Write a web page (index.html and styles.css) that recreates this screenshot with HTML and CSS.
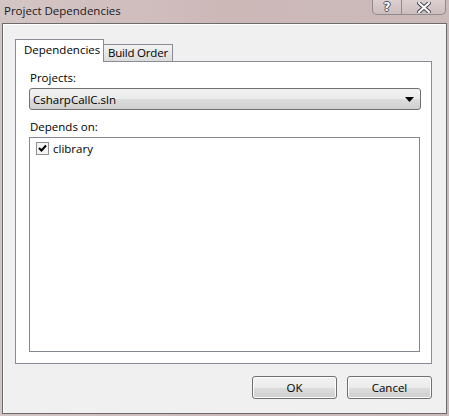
FILE: index.html
```html
<!DOCTYPE html>
<html lang="en">
<head>
    <meta charset="UTF-8">
    <title>Project Dependencies</title>
    <link rel="stylesheet" href="styles.css">
</head>
<body>
    <div class="window">
        <header class="titlebar">
            <span class="title">Project Dependencies</span>
            <div class="caption-buttons">
                <span class="cap-btn help">?</span>
                <span class="cap-btn close">
                    <svg width="14" height="11" viewBox="0 0 14 11">
                        <path d="M2 1 L12 10 M12 1 L2 10" stroke="#4a4a55" stroke-width="4" stroke-linecap="square"/>
                        <path d="M2 1 L12 10 M12 1 L2 10" stroke="#fff" stroke-width="2" stroke-linecap="square"/>
                    </svg>
                </span>
            </div>
        </header>

        <div class="client">
            <div class="tabs">
                <div class="tab active">Dependencies</div>
                <div class="tab">Build Order</div>
            </div>
            <div class="tab-page">
                <label class="field-label">Projects:</label>
                <div class="combo">
                    <span>CsharpCallC.sln</span>
                    <svg width="9" height="5" viewBox="0 0 9 5"><path d="M0 0 H9 L4.5 5 Z" fill="#000"/></svg>
                </div>
                <label class="field-label">Depends on:</label>
                <div class="listbox">
                    <div class="list-item">
                        <span class="checkbox">
                            <svg width="9" height="9" viewBox="0 0 9 9"><path d="M1 4 L3.5 6.5 L8 1.5" stroke="#000" stroke-width="2" fill="none"/></svg>
                        </span>
                        <span>clibrary</span>
                    </div>
                </div>
            </div>
            <footer class="dialog-buttons">
                <button class="btn">OK</button>
                <button class="btn">Cancel</button>
            </footer>
        </div>
    </div>
</body>
</html>
```

FILE: styles.css
```css
/* Reset */
* {
  margin: 0;
  padding: 0;
  box-sizing: border-box;
}

body {
  width: 449px;
  height: 416px;
  overflow: hidden;
  font-family: "Open Sans", "Noto Sans", sans-serif;
  font-size: 11.5px;
  color: #000;
  background: #c8b5b5;
}

/* Window frame */
.window {
  display: flex;
  flex-direction: column;
  height: 416px;
  padding: 0 2px 2px 2px;
  background: linear-gradient(90deg, #d4c5c5 0%, #cdb8b8 50%, #cbbaba 100%);
}

.titlebar {
  display: flex;
  justify-content: space-between;
  align-items: flex-start;
  height: 23px;
}

.title {
  padding: 1px 0 0 2px;
  font-size: 11.5px;
  line-height: 20px;
  color: #1a1a1a;
}

.caption-buttons {
  display: flex;
  margin-right: 1px;
  border: 1px solid #8f8a8c;
  border-top: none;
  border-radius: 0 0 5px 5px;
  background: linear-gradient(#dccfcf, #cdbebe);
  height: 15px;
}

.cap-btn {
  display: flex;
  align-items: center;
  justify-content: center;
  height: 14px;
}

.help {
  width: 29px;
  border-right: 1px solid #8f8a8c;
  font-family: "DejaVu Sans", sans-serif;
  font-weight: bold;
  font-size: 12px;
  color: #fff;
  text-shadow: 1px 0 #4a4a55, -1px 0 #4a4a55, 0 1px #4a4a55, 0 -1px #4a4a55;
}

.close {
  width: 43px;
}

/* Client area */
.client {
  flex: 1;
  display: flex;
  flex-direction: column;
  padding: 14px 14px 0 12px;
  background: #f0f0f0;
  border: 1px solid #6b6b6b;
  box-shadow: inset 1px 1px 0 #fff;
}

.tabs {
  display: flex;
  align-items: flex-end;
  height: 23px;
  position: relative;
  z-index: 1;
}

.tab {
  height: 17px;
  padding: 0 4px 0 4px;
  line-height: 16px;
  border: 1px solid #898c95;
  border-bottom: none;
  background: linear-gradient(#f3f3f3, #dcdcdc);
  letter-spacing: -0.2px;
}

.tab.active {
  height: 23px;
  width: 89px;
  padding: 2px 0 0 8px;
  background: #fff;
  border-right: 1px solid #898c95;
  margin-bottom: -1px;
  letter-spacing: 0;
}

.tab.active + .tab {
  border-left: none;
}

.tab-page {
  height: 303px;
  display: flex;
  flex-direction: column;
  padding: 7px 10px 0 13px;
  background: #fff;
  border: 1px solid #898c95;
}

.field-label {
  display: block;
  height: 19px;
  line-height: 18px;
  padding-left: 1px;
}

.combo {
  display: flex;
  justify-content: space-between;
  align-items: center;
  height: 22px;
  margin-bottom: 8px;
  padding: 0 6px 0 3px;
  border: 1px solid #707070;
  border-radius: 3px;
  background: linear-gradient(#f2f2f2 0%, #ebebeb 50%, #dddddd 51%, #cfcfcf 100%);
}

.listbox {
  height: 215px;
  margin-right: 1px;
  padding: 2px 0 0 6px;
  border: 1px solid #828790;
  background: #fff;
}

.list-item {
  display: flex;
  align-items: center;
  gap: 4px;
  height: 16px;
}

.checkbox {
  display: flex;
  align-items: center;
  justify-content: center;
  width: 13px;
  height: 13px;
  border: 1px solid #8e8f8f;
  background: #f4f4f4;
}

/* Dialog buttons */
.dialog-buttons {
  display: flex;
  justify-content: flex-end;
  gap: 10px;
  padding-top: 12px;
}

.btn {
  width: 85px;
  height: 23px;
  font-family: inherit;
  font-size: 11.5px;
  color: #000;
  border: 1px solid #707070;
  border-radius: 3px;
  background: linear-gradient(#f2f2f2 0%, #ebebeb 50%, #dddddd 51%, #cfcfcf 100%);
  box-shadow: inset 0 0 0 1px #fcfcfc;
}
```
